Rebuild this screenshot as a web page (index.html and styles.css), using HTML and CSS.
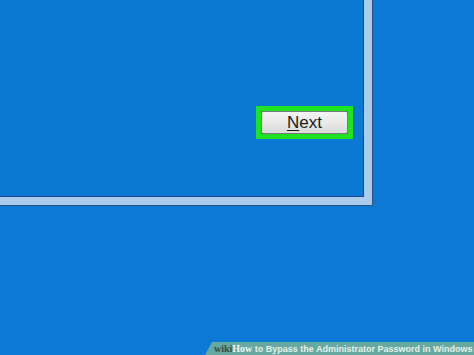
FILE: index.html
```html
<!DOCTYPE html>
<html>
<head>
<meta charset="utf-8">
<link rel="stylesheet" href="styles.css">
</head>
<body>
<div class="window">
  <div class="frame">
    <div class="client">
      <div class="highlight">
        <button class="btn"><span class="u">N</span>ext</button>
      </div>
    </div>
  </div>
</div>
<div class="banner"><span class="wiki">wiki</span><span class="how">How</span> to Bypass the Administrator Password in Windows</div>
</body>
</html>
```
FILE: styles.css
```css
html, body {
  margin: 0;
  padding: 0;
}
body {
  width: 474px;
  height: 355px;
  background: #0b79d5;
  overflow: hidden;
  position: relative;
  font-family: "Liberation Sans", Arial, sans-serif;
}
.window {
  width: 372px;
  height: 205px;
  border-right: 1px solid #2b4f7e;
  border-bottom: 1px solid #2b4f7e;
}
.frame {
  height: 205px;
  box-sizing: border-box;
  border-right: 8px solid #a8ccec;
  border-bottom: 8px solid #a8ccec;
}
.client {
  height: 197px;
  box-sizing: border-box;
  border-right: 1px solid #2a3f96;
  border-bottom: 1px solid #2a3f96;
  display: flex;
  justify-content: flex-end;
  align-items: flex-start;
  padding-top: 106px;
  padding-right: 10px;
  background: #0b78d4;
}
.highlight {
  border: 5px solid #1ee31e;
  display: flex;
}
.btn {
  width: 87px;
  height: 23px;
  box-sizing: border-box;
  margin: 0;
  padding: 0;
  border: 1px solid #7a7a7a;
  border-radius: 2px;
  background: linear-gradient(#f4f4f4, #e9e9e9 50%, #dadada);
  font-family: "Liberation Sans", Arial, sans-serif;
  font-size: 17px;
  color: #1a1a1a;
  line-height: 21px;
}
.u {
  text-decoration: underline;
  text-underline-offset: 2px;
}
.banner {
  position: absolute;
  left: 205px;
  right: 0;
  bottom: 0;
  height: 13px;
  background: rgba(120, 176, 150, 0.85);
  clip-path: polygon(7px 0, 100% 0, 100% 100%, 0 100%);
  color: #e6f2ea;
  font-size: 9px;
  font-weight: bold;
  line-height: 13px;
  padding-left: 9px;
  white-space: nowrap;
}
.wiki {
  color: #3a4a44;
  font-family: "Liberation Serif", serif;
  font-size: 10px;
}
.how {
  font-family: "Liberation Serif", serif;
  font-size: 10px;
  color: #eef7f0;
}
```
